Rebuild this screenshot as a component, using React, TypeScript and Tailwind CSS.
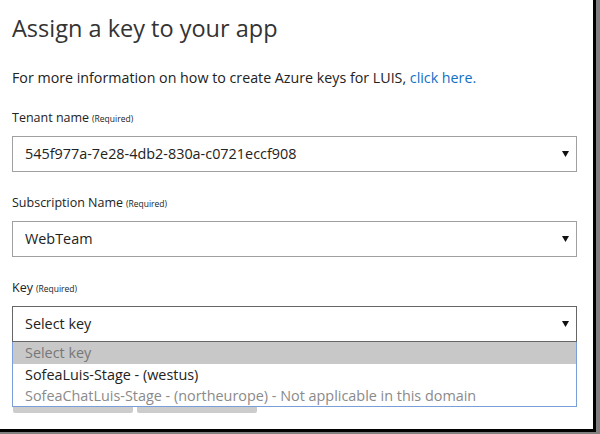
const font = { fontFamily: '"Open Sans", "Noto Sans", sans-serif' };

function Arrow() {
  return (
    <svg width="7" height="6" viewBox="0 0 7 6" className="shrink-0">
      <path d="M0 0 L7 0 L3.5 6 Z" fill="#111" />
    </svg>
  );
}

function Label({ text }: { text: string }) {
  return (
    <div className="flex h-[13px] items-baseline gap-[3px] text-[12.5px] leading-[13px] text-[#222]">
      <span>{text}</span>
      <span className="text-[8.5px]">(Required)</span>
    </div>
  );
}

function SelectBox({ value, active }: { value: string; active?: boolean }) {
  return (
    <div
      className={`flex h-[36px] w-[565px] items-center justify-between border bg-white pl-[12px] pr-[7px] text-[14.4px] text-[#222] ${
        active ? "border-[#666]" : "border-[#a0a0a0]"
      }`}
    >
      <span>{value}</span>
      <Arrow />
    </div>
  );
}

const options = [
  { label: "Select key", className: "bg-[#c8c8c8] text-[#777] h-[22px]" },
  { label: "SofeaLuis-Stage - (westus)", className: "text-[#222] h-[21px]" },
  {
    label: "SofeaChatLuis-Stage - (northeurope) - Not applicable in this domain",
    className: "text-[#8a8a8a] h-[21px]",
  },
];

export default function App() {
  return (
    <div className="flex h-[434px] w-[600px] flex-col bg-[#808080]" style={font}>
      <div className="flex h-[432px] w-[596px] flex-col border-b-[3px] border-r-[3px] border-black bg-white pl-[12px]">
        <h1 className="mt-[16px] h-[24px] text-[23.5px] font-normal leading-[24px] text-[#333]">
          Assign a key to your app
        </h1>
        <p className="mt-[30px] h-[15px] text-[14.25px] leading-[15px] text-[#222]">
          For more information on how to create Azure keys for LUIS,{" "}
          <a className="text-[#0f6fc6]">click here.</a>
        </p>

        <div className="mt-[26px]">
          <Label text="Tenant name" />
        </div>
        <div className="mt-[12px]">
          <SelectBox value="545f977a-7e28-4db2-830a-c0721eccf908" />
        </div>

        <div className="mt-[24px]">
          <Label text="Subscription Name" />
        </div>
        <div className="mt-[12px]">
          <SelectBox value="WebTeam" />
        </div>

        <div className="mt-[24px]">
          <Label text="Key" />
        </div>
        <div className="relative mt-[12px]">
          <SelectBox value="Select key" active />
          <div className="absolute left-[1px] top-[77px] flex gap-[4px]">
            <div className="h-[30px] w-[120px] rounded-[2px] bg-[#cccccc]" />
            <div className="h-[30px] w-[120px] rounded-[2px] bg-[#cccccc]" />
          </div>
          <div className="absolute left-0 top-[36px] z-10 flex w-[565px] flex-col border border-t-0 border-[#7a9fd8] bg-white">
            {options.map((o) => (
              <div
                key={o.label}
                className={`flex items-center pl-[12px] text-[14.4px] ${o.className}`}
              >
                {o.label}
              </div>
            ))}
          </div>
        </div>
      </div>
    </div>
  );
}
